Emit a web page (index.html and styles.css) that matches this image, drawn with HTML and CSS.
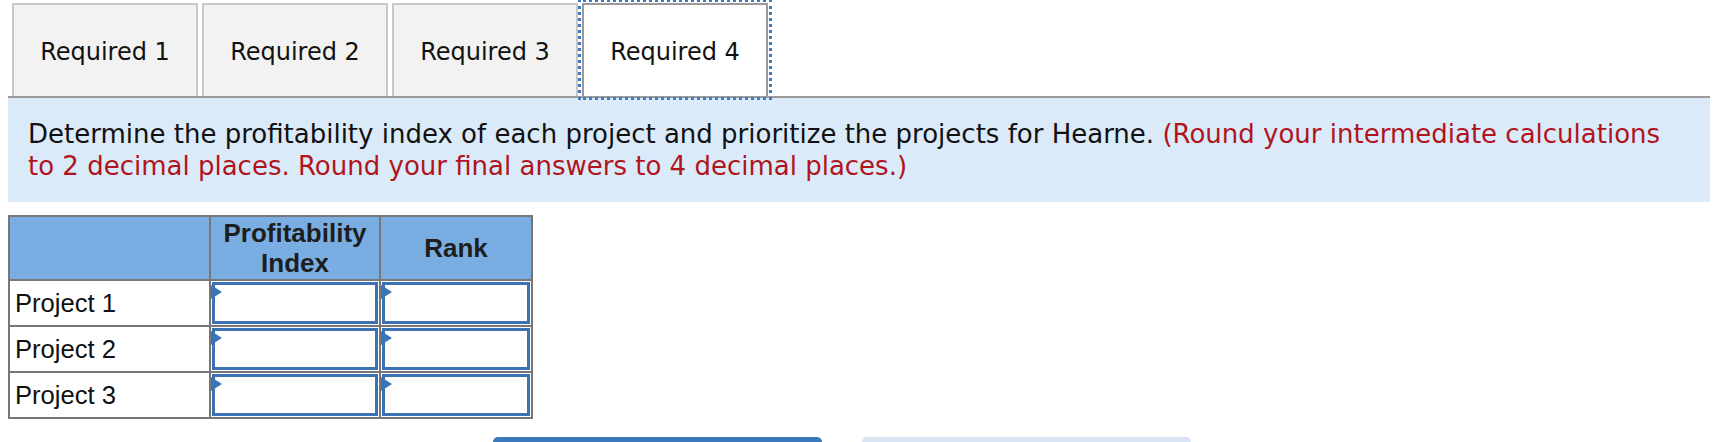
FILE: index.html
```html
<!DOCTYPE html>
<html lang="en">
<head>
<meta charset="utf-8">
<title>Required 4</title>
<link rel="stylesheet" href="styles.css">
</head>
<body>
<div class="page">
  <div class="tabs">
    <div class="tab">Required 1</div>
    <div class="tab">Required 2</div>
    <div class="tab">Required 3</div>
    <div class="tab active">Required 4</div>
  </div>
  <div class="question">
    Determine the profitability index of each project and prioritize the projects for Hearne. <span class="note">(Round your intermediate calculations to 2 decimal places. Round your final answers to 4 decimal places.)</span>
  </div>
  <table class="grid">
    <thead>
      <tr>
        <th class="blank"></th>
        <th class="col-pi">Profitability<br>Index</th>
        <th class="col-rank">Rank</th>
      </tr>
    </thead>
    <tbody>
      <tr>
        <td class="label">Project 1</td>
        <td class="entry"><input type="text" aria-label="Project 1 profitability index"></td>
        <td class="entry"><input type="text" aria-label="Project 1 rank"></td>
      </tr>
      <tr>
        <td class="label">Project 2</td>
        <td class="entry"><input type="text" aria-label="Project 2 profitability index"></td>
        <td class="entry"><input type="text" aria-label="Project 2 rank"></td>
      </tr>
      <tr>
        <td class="label">Project 3</td>
        <td class="entry"><input type="text" aria-label="Project 3 profitability index"></td>
        <td class="entry"><input type="text" aria-label="Project 3 rank"></td>
      </tr>
    </tbody>
  </table>
  <div class="nav">
    <button class="btn prev" aria-label="Required 3"></button>
    <button class="btn next" aria-label="Required 4"></button>
  </div>
</div>
</body>
</html>
```
FILE: styles.css
```css
html, body {
  margin: 0;
  padding: 0;
  background: #ffffff;
  overflow: hidden;
}

.page {
  padding: 0 18px 0 8px;
}

.tabs {
  display: flex;
  gap: 4px;
  padding: 3px 0 0 4px;
  border-bottom: 2px solid #9b9b9b;
}

.tab {
  width: 186px;
  height: 93px;
  box-sizing: border-box;
  display: flex;
  align-items: center;
  justify-content: center;
  background: #f2f2f2;
  border: 2px solid #c8c8c8;
  border-bottom: none;
  font-family: "DejaVu Sans", Verdana, sans-serif;
  font-size: 24px;
  color: #111111;
  padding-top: 2px;
}

.tab.active {
  background: #ffffff;
  border-color: #9a9a9a;
  outline: 3px dotted #3f7bc4;
  outline-offset: 1px;
}

.question {
  background: #dbeaf8;
  padding: 20px 24px 20px 20px;
  font-family: "DejaVu Sans", Verdana, sans-serif;
  font-size: 26px;
  line-height: 32px;
  color: #111111;
}

.note {
  color: #b0141d;
}

.grid {
  margin-top: 13px;
  border-collapse: collapse;
  font-family: "Liberation Sans", Arial, sans-serif;
}

.grid th,
.grid td {
  border: 2px solid #777777;
  padding: 0;
}

.grid th {
  background: #7aaee3;
  font-weight: bold;
  font-size: 26px;
  line-height: 30px;
  color: #1e1e1e;
  height: 62px;
  text-align: center;
}

.grid th.blank { width: 199px; }
.grid th.col-pi { width: 168px; }
.grid th.col-rank { width: 150px; }

.grid td.label {
  font-size: 25.6px;
  color: #111111;
  padding-left: 5px;
  height: 43px;
}

.grid td.entry {
  position: relative;
  padding: 1px 1px 0 1px;
  height: 43px;
  vertical-align: top;
}

.grid td.entry::before {
  content: "";
  position: absolute;
  left: 0;
  top: 4px;
  border-left: 11px solid #3a75b8;
  border-top: 7px solid transparent;
  border-bottom: 7px solid transparent;
}

.grid td.entry input {
  display: block;
  box-sizing: border-box;
  width: 100%;
  height: 42px;
  margin: 0;
  border: 3px solid #3c73b4;
  background: #ffffff;
  outline: none;
}

.nav {
  display: flex;
  gap: 40px;
  margin: 18px 0 0 485px;
}

.btn {
  width: 329px;
  height: 44px;
  border-radius: 5px;
  border: none;
}

.btn.prev {
  background: #3b78bc;
}

.btn.next {
  background: #d8e5f2;
}
```
